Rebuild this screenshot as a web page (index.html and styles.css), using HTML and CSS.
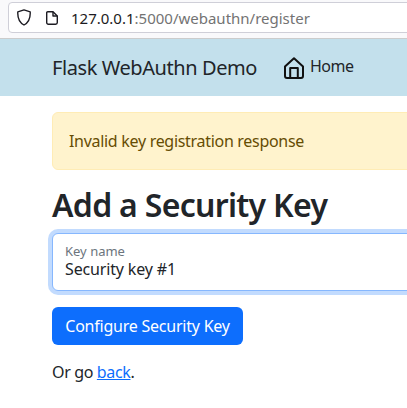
FILE: index.html
```html
<!DOCTYPE html>
<html lang="en">
<head>
    <meta charset="UTF-8">
    <meta name="viewport" content="width=device-width, initial-scale=1.0">
    <title>Flask WebAuthn Demo</title>
    <link rel="stylesheet" href="styles.css">
</head>
<body>
    <div class="browser-bar">
        <div class="url-bar">
            <svg class="shield" width="14" height="17" viewBox="0 0 14 17" fill="none" stroke="#1c1b22" stroke-width="1.4" stroke-linejoin="round">
                <path d="M7 .9 L13.2 2.9 C13.5 8.5 11.6 13.5 7 16 C2.4 13.5 .5 8.5 .8 2.9 Z"/>
            </svg>
            <svg class="page-icon" width="12" height="14" viewBox="0 0 12 14" fill="none" stroke="#1c1b22" stroke-width="1.4" stroke-linejoin="round">
                <path d="M1.7 .7H7L11.3 5V11.6A1.7 1.7 0 0 1 9.6 13.3H2.4A1.7 1.7 0 0 1 .7 11.6V1.7A1 1 0 0 1 1.7 .7Z"/>
                <path d="M7 .7V5H11.3"/>
            </svg>
            <span class="url"><span class="host">127.0.0.1</span>:5000/webauthn/register</span>
        </div>
    </div>

    <nav class="navbar">
        <a class="brand" href="#">Flask WebAuthn Demo</a>
        <a class="nav-link" href="#">
            <svg width="20" height="22" viewBox="0 0 20 22" fill="none" stroke="#111" stroke-width="2" stroke-linejoin="round">
                <path d="M10 1.2 L19 9.5 V19 A2 2 0 0 1 17 21 H3 A2 2 0 0 1 1 19 V9.5 Z"/>
                <path d="M6.2 21 V11 H13.8 V21"/>
            </svg>
            <span class="nav-text">Home</span>
        </a>
    </nav>

    <main class="container">
        <div class="alert">Invalid key registration response</div>
        <h1>Add a Security Key</h1>
        <form>
            <div class="field">
                <label for="name">Key name</label>
                <input id="name" type="text" value="Security key #1">
            </div>
            <button type="button" class="btn">Configure Security Key</button>
        </form>
        <p class="back">Or go <a href="#">back</a>.</p>
    </main>
</body>
</html>
```

FILE: styles.css
```css
* {
    box-sizing: border-box;
    margin: 0;
    padding: 0;
}

html, body {
    height: 100%;
    overflow: hidden;
}

body {
    font-family: "Noto Sans", sans-serif;
    font-size: 16px;
    color: #212529;
    background-color: #fff;
}

.browser-bar {
    height: 39px;
    padding: 2px 0 5px 8px;
    background-color: #f9f9fb;
    border-bottom: 1px solid #ccc;
}

.url-bar {
    display: flex;
    align-items: center;
    width: 500px;
    height: 31px;
    padding-left: 8px;
    background-color: #fff;
    border: 1px solid #cfcfd8;
    border-radius: 4px;
}

.shield {
    margin-right: 15px;
}

.page-icon {
    margin-right: 13px;
}

.url {
    font-size: 15px;
    color: #737373;
}

.host {
    color: #1c1b22;
}

.navbar {
    display: flex;
    align-items: center;
    height: 57px;
    padding-left: 52px;
    background-color: #c3e0ec;
}

.brand {
    margin-right: 27px;
    font-size: 20px;
    letter-spacing: -.42px;
    color: #212529;
    text-decoration: none;
}

.nav-link {
    display: flex;
    align-items: center;
    gap: 6px;
    color: #212529;
    text-decoration: none;
}

.nav-text {
    margin-bottom: 3px;
    letter-spacing: -.5px;
}

.container {
    width: 700px;
    padding: 16px 0 0 52px;
}

.alert {
    height: 58px;
    padding: 16px;
    margin-bottom: 16px;
    line-height: 24px;
    letter-spacing: -.3px;
    color: #664d03;
    background-color: #fff3cd;
    border: 1px solid #ffecb5;
    border-radius: 6px;
}

h1 {
    margin-bottom: 9px;
    font-size: 32px;
    font-weight: 600;
    line-height: 38px;
    letter-spacing: -.7px;
}

.field {
    position: relative;
    margin-bottom: 16px;
}

.field label {
    position: absolute;
    top: 10px;
    left: 13px;
    font-size: 13px;
    line-height: 16px;
    color: #6c757d;
}

.field input {
    display: block;
    width: 100%;
    height: 58px;
    padding: 23px 12px 9px;
    font-family: inherit;
    font-size: 16px;
    letter-spacing: -.15px;
    color: #212529;
    border: 1px solid #86b7fe;
    border-radius: 6px;
    outline: none;
    box-shadow: 0 0 0 4px rgba(13, 110, 253, .25);
}

.btn {
    display: block;
    width: 191px;
    height: 38px;
    margin-bottom: 15px;
    font-family: inherit;
    font-size: 16px;
    letter-spacing: -.23px;
    color: #fff;
    background-color: #0d6efd;
    border: none;
    border-radius: 6px;
}

.back {
    line-height: 24px;
    letter-spacing: -.35px;
}

.back a {
    color: #0d6efd;
}
```
